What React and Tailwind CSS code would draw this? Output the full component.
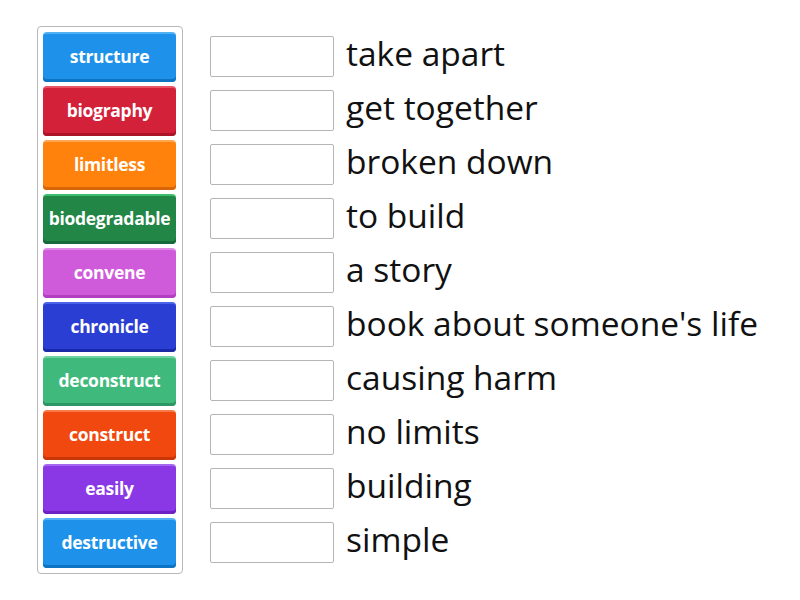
const tiles = [
  { t: "structure", bg: "bg-[#1e92ea]", top: "border-t-[#4fb0f5]", bot: "shadow-[inset_0_-3px_0_#0d74c4]" },
  { t: "biography", bg: "bg-[#d4213a]", top: "border-t-[#e85465]", bot: "shadow-[inset_0_-3px_0_#ad1428]" },
  { t: "limitless", bg: "bg-[#ff820c]", top: "border-t-[#ffa650]", bot: "shadow-[inset_0_-3px_0_#d8650a]" },
  { t: "biodegradable", bg: "bg-[#218646]", top: "border-t-[#3bbf6c]", bot: "shadow-[inset_0_-3px_0_#16693a]" },
  { t: "convene", bg: "bg-[#cf5bdb]", top: "border-t-[#e08ae8]", bot: "shadow-[inset_0_-3px_0_#b33ec2]" },
  { t: "chronicle", bg: "bg-[#2b3ed3]", top: "border-t-[#4b63ea]", bot: "shadow-[inset_0_-3px_0_#1b2ba8]" },
  { t: "deconstruct", bg: "bg-[#3fba7c]", top: "border-t-[#6ed3a0]", bot: "shadow-[inset_0_-3px_0_#2c9762]" },
  { t: "construct", bg: "bg-[#f0480e]", top: "border-t-[#f87a48]", bot: "shadow-[inset_0_-3px_0_#c93607]" },
  { t: "easily", bg: "bg-[#8a38e6]", top: "border-t-[#a667f0]", bot: "shadow-[inset_0_-3px_0_#6d21c4]" },
  { t: "destructive", bg: "bg-[#1e92ea]", top: "border-t-[#4fb0f5]", bot: "shadow-[inset_0_-3px_0_#0d74c4]" },
];

const defs = [
  "take apart",
  "get together",
  "broken down",
  "to build",
  "a story",
  "book about someone's life",
  "causing harm",
  "no limits",
  "building",
  "simple",
];

export default function App() {
  return (
    <div className="w-[800px] h-[600px] bg-white flex font-['Open_Sans',sans-serif]">
      <div className="ml-[37px] mt-[26px] w-[146px] h-[548px] border border-[#b8b8b8] rounded-[4px] px-[5px] pt-[5px] flex flex-col gap-[4px]">
        {tiles.map((x) => (
          <div
            key={x.t}
            className={`h-[50px] w-[133px] rounded-[4px] border-t-2 ${x.top} ${x.bg} ${x.bot} flex items-center justify-center pb-[4px] text-white font-bold text-[17.5px] tracking-[-0.3px]`}
          >
            {x.t}
          </div>
        ))}
      </div>
      <div className="ml-[27px] mt-[36px] flex flex-col gap-[13px]">
        {defs.map((d) => (
          <div key={d} className="flex items-center h-[41px]">
            <div className="w-[124px] h-[41px] border border-[#b5b5b5] rounded-[2px] bg-white" />
            <div className="ml-[12px] text-[33.5px] text-[#111] leading-none -mt-[6px] whitespace-nowrap">{d}</div>
          </div>
        ))}
      </div>
    </div>
  );
}
